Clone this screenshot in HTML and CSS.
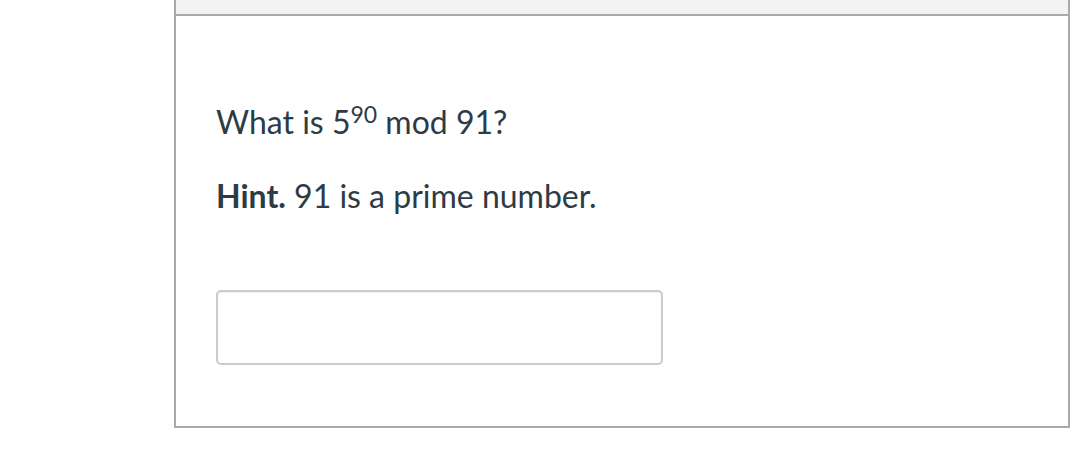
FILE: index.html
```html
<!DOCTYPE html>
<html lang="en">
<head>
<meta charset="utf-8">
<title>Question</title>
<link rel="stylesheet" href="styles.css">
</head>
<body>
<div class="question">
  <div class="question-header"></div>
  <div class="question-body">
    <p class="q-text">What is 5<sup class="exp">90</sup> mod 91?</p>
    <p class="q-text"><strong>Hint.</strong> 91 is a prime number.</p>
    <div class="answer">
      <input class="answer-input" type="text" aria-label="Answer">
    </div>
  </div>
</div>
</body>
</html>
```

FILE: styles.css
```css
html, body {
  margin: 0;
  padding: 0;
  background: #ffffff;
}

body {
  font-family: Lato, "Open Sans", sans-serif;
  color: #2d3b45;
}

.question {
  margin-left: 174px;
  width: 892px;
  border: 2px solid #a9a9a9;
  border-top: none;
}

.question-header {
  height: 14px;
  background: #f3f3f3;
  border-bottom: 2px solid #a9a9a9;
}

.question-body {
  padding: 85px 40px 61px 40px;
}

.q-text {
  margin: 0 0 32px 0;
  font-size: 32px;
  line-height: 42px;
}

.q-text strong {
  font-weight: 700;
}

.exp {
  font-size: 23px;
  line-height: 0;
  vertical-align: 11px;
}

.answer {
  padding-top: 41px;
}

.answer-input {
  display: block;
  box-sizing: border-box;
  width: 447px;
  height: 75px;
  margin: 0;
  border: 2px solid #cbcbcb;
  border-radius: 5px;
  background: #fff;
  box-shadow: inset 0 1px 2px rgba(0,0,0,0.06);
  outline: none;
}
```
